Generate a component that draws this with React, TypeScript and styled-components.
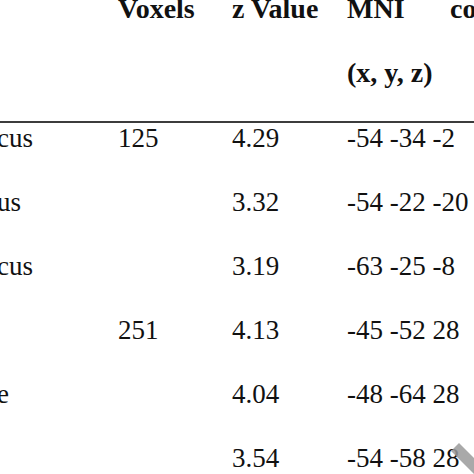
import styled, { createGlobalStyle } from 'styled-components';

const GlobalStyle = createGlobalStyle`
  html, body {
    margin: 0;
    padding: 0;
    background: #ffffff;
  }
`

type Row = {
    region: string;
    voxels: string;
    z: string;
    mni: string;
};

const rows: Row[] = [
    { region: 'cus', voxels: '125', z: '4.29', mni: '-54 -34 -2' },
    { region: 'us', voxels: '', z: '3.32', mni: '-54 -22 -20' },
    { region: 'cus', voxels: '', z: '3.19', mni: '-63 -25 -8' },
    { region: '', voxels: '251', z: '4.13', mni: '-45 -52 28' },
    { region: 'e', voxels: '', z: '4.04', mni: '-48 -64 28' },
    { region: '', voxels: '', z: '3.54', mni: '-54 -58 28' },
];

export default function App() {
    return (
        <>
            <GlobalStyle />
            <Viewport>
                <Table>
                    <Line>
                        <HeadCell />
                        <HeadCell>Voxels</HeadCell>
                        <HeadCell>z Value</HeadCell>
                        <HeadCell>MNI</HeadCell>
                        <HeadCell>co</HeadCell>
                    </Line>
                    <Line $pad={33}>
                        <HeadCell />
                        <HeadCell />
                        <HeadCell />
                        <HeadCell>(x, y, z)</HeadCell>
                        <HeadCell />
                    </Line>
                    <Rule />
                    {rows.map((row, i) => (
                        <Line key={i}>
                            <Cell>{row.region}</Cell>
                            <Cell>{row.voxels}</Cell>
                            <Cell>{row.z}</Cell>
                            <Cell>{row.mni}</Cell>
                            <Cell />
                        </Line>
                    ))}
                </Table>
                <Watermark width="474" height="474" viewBox="0 0 474 474">
                    <polygon points="451,451 459,443 474,458 474,474" fill="#9a9a9a" fillOpacity="0.85" />
                </Watermark>
            </Viewport>
        </>
    )
}

const Viewport = styled.div`
  position: relative;
  width: 474px;
  height: 474px;
  overflow: hidden;
  background: #ffffff;
`

const Table = styled.div`
  display: flex;
  flex-direction: column;
  width: 640px;
  margin: -6px 0 0 -3px;
  font-family: "Liberation Serif", "Times New Roman", serif;
  font-size: 27px;
  color: #111111;
`

const Line = styled.div<{ $pad?: number }>`
  display: grid;
  grid-template-columns: 121px 114px 115px 103px 1fr;
  line-height: 30px;
  padding-bottom: ${p => p.$pad ?? 34}px;
  white-space: nowrap;
`

const Cell = styled.div`
  font-weight: 400;
`

const HeadCell = styled.div`
  font-weight: 700;
  font-size: 28px;
`

const Rule = styled.div`
  height: 2px;
  background: #3c3c3c;
`

const Watermark = styled.svg`
  position: absolute;
  left: 0;
  top: 0;
  pointer-events: none;
`
